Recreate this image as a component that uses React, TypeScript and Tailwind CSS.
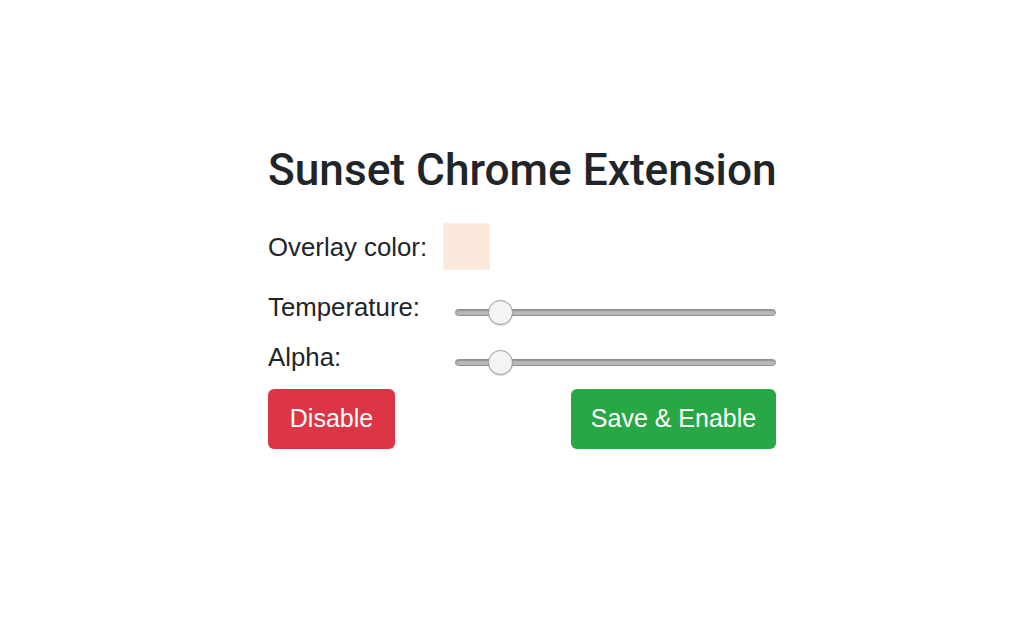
import React from "react";

function Slider({ pos }: { pos: number }) {
  return (
    <div className="relative flex-1 h-[25px] flex items-center">
      <div className="w-full h-[7px] rounded-full bg-[#b8b8b8] border border-[#8f8f8f] shadow-[inset_0_1px_1px_rgba(0,0,0,0.2)]" />
      <div
        className="absolute top-0 w-[25px] h-[25px] rounded-full bg-[#f4f4f4] border border-[#9b9b9b] shadow-[0_1px_1px_rgba(0,0,0,0.15)]"
        style={{ left: pos }}
      />
    </div>
  );
}

export default function App() {
  return (
    <div className="w-[1020px] h-[638px] bg-white text-[#212529] font-['Liberation_Sans',Arial,sans-serif]">
      <div className="ml-[268px] w-[508px] flex flex-col">
        <h3 className="mt-[144px] h-[52px] flex items-center text-[44.2px] font-medium font-['Roboto',sans-serif] whitespace-nowrap">
          Sunset Chrome Extension
        </h3>
        <div className="mt-[27px] h-[47px] flex items-center">
          <span className="text-[25.8px] leading-[30px]">Overlay color:</span>
          <div className="ml-[16px] w-[47px] h-[47px] bg-[#fde8dc] border border-[#faeee6]" />
        </div>
        <div className="mt-[22px] h-[36px] flex items-start">
          <span className="w-[187px] text-[25.8px] leading-[30px]">Temperature:</span>
          <div className="flex-1 mt-[8px] flex">
            <Slider pos={33} />
          </div>
        </div>
        <div className="mt-[14px] h-[36px] flex items-start">
          <span className="w-[187px] text-[25.8px] leading-[30px]">Alpha:</span>
          <div className="flex-1 mt-[8px] flex">
            <Slider pos={33} />
          </div>
        </div>
        <div className="mt-[11px] flex justify-between">
          <button className="h-[60px] w-[127px] rounded-[6px] bg-[#dc3545] text-white text-[25px]">
            Disable
          </button>
          <button className="h-[60px] w-[205px] rounded-[6px] bg-[#28a745] text-white text-[25px]">
            Save &amp; Enable
          </button>
        </div>
      </div>
    </div>
  );
}
